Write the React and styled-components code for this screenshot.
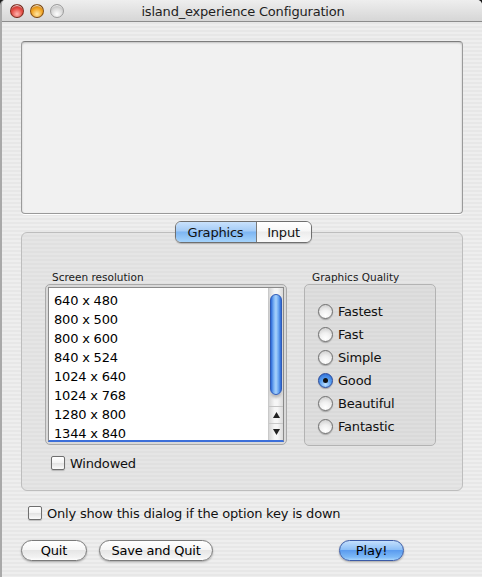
import React from 'react';
import styled, { createGlobalStyle, css } from 'styled-components';

const resolutions = [
  '640 x 480',
  '800 x 500',
  '800 x 600',
  '840 x 524',
  '1024 x 640',
  '1024 x 768',
  '1280 x 800',
  '1344 x 840',
];

const qualities = ['Fastest', 'Fast', 'Simple', 'Good', 'Beautiful', 'Fantastic'];

const GlobalStyle = createGlobalStyle`
  html, body {
    margin: 0;
    padding: 0;
    background: #1c1c1c;
  }
  * {
    box-sizing: border-box;
  }
`;

const pinstripe = css`
  background: repeating-linear-gradient(
    to bottom,
    #eeeeee 0px,
    #eeeeee 2px,
    #e7e7e7 2px,
    #e7e7e7 4px
  );
`;

const Window = styled.div`
  width: 482px;
  height: 577px;
  display: flex;
  flex-direction: column;
  font-family: "DejaVu Sans", "Lucida Grande", sans-serif;
  letter-spacing: -0.2px;
  color: #111;
  border-radius: 5px 5px 0 0;
  overflow: hidden;
  border-left: 2px solid #a9a9a9;
  ${pinstripe}
`;

const TitleBar = styled.div`
  height: 22px;
  flex: none;
  display: flex;
  align-items: center;
  padding-left: 8px;
  border-bottom: 1px solid #8c8c8c;
  background: linear-gradient(to bottom, #eeeeee 0%, #e2e2e2 50%, #d6d6d6 100%);
`;

const Lights = styled.div`
  display: flex;
  gap: 6px;
`;

const lightColors = {
  close: ['#ffb3ad', '#e2463f', '#8e1b14'],
  min: ['#ffe6a3', '#f0a11d', '#9a5a06'],
  zoom: ['#ffffff', '#d6d6d6', '#9a9a9a'],
};

const Light = styled.span`
  width: 14px;
  height: 14px;
  border-radius: 50%;
  background: radial-gradient(
    circle at 50% 75%,
    ${p => lightColors[p.$kind][0]} 0%,
    ${p => lightColors[p.$kind][1]} 55%,
    ${p => lightColors[p.$kind][2]} 100%
  );
  border: 1px solid ${p => (p.$kind === 'zoom' ? '#9c9c9c' : 'rgba(60,20,0,0.55)')};
  box-shadow: inset 0 2px 1px -1px rgba(255, 255, 255, 0.85);
`;

const Title = styled.div`
  flex: 1;
  text-align: center;
  font-size: 13px;
  color: #1e1e1e;
  margin-right: 60px;
  padding-top: 1px;
`;

const Content = styled.div`
  display: flex;
  flex-direction: column;
  padding: 0 19px 0 19px;
`;

const TopPanel = styled.div`
  margin-top: 19px;
  height: 173px;
  border: 1px solid #9a9a9a;
  border-top-color: #7d7d7d;
  border-radius: 4px;
  background: #f1f1f1;
  box-shadow: inset 0 1px 2px rgba(0, 0, 0, 0.2), 0 1px 0 #fff;
`;

const TabBox = styled.div`
  margin-top: 18px;
  height: 259px;
  border: 1px solid #bdbdbd;
  border-radius: 6px;
  display: flex;
  flex-direction: column;
  background: repeating-linear-gradient(
    to bottom,
    #e5e5e5 0px,
    #e5e5e5 2px,
    #e0e0e0 2px,
    #e0e0e0 4px
  );
`;

const Tabs = styled.div`
  align-self: center;
  margin-top: -12px;
  margin-left: 2px;
  display: flex;
  height: 22px;
  border: 1px solid #6f6f6f;
  border-radius: 6px;
  overflow: hidden;
  box-shadow: 0 1px 1px rgba(0, 0, 0, 0.2);
`;

const Tab = styled.div`
  font-size: 13px;
  display: flex;
  align-items: center;
  justify-content: center;
  width: ${p => p.$width}px;
  color: #111;
  background: ${p =>
    p.$active
      ? 'linear-gradient(to bottom, #c9e2fc 0%, #a4cbf6 45%, #7db5f2 50%, #a5d3fb 100%)'
      : 'linear-gradient(to bottom, #ffffff 0%, #f7f7f7 45%, #ececec 50%, #fafafa 100%)'};
  & + & {
    border-left: 1px solid #7a7a7a;
  }
`;

const Columns = styled.div`
  display: flex;
  margin-top: 28px;
  padding-left: 23px;
  gap: 17px;
`;

const Column = styled.div`
  display: flex;
  flex-direction: column;
  width: ${p => p.$width}px;
`;

const GroupLabel = styled.div`
  font-size: 10.5px;
  letter-spacing: 0;
  line-height: 13px;
  height: 13px;
  color: #1a1a1a;
  padding-left: ${p => p.$indent}px;
`;

const ListFrame = styled.div`
  height: 161px;
  flex: none;
  border: 1px solid #a9a9a9;
  border-radius: 5px;
  padding: 2px;
  background: #d9d9d9;
  display: flex;
`;

const ListInner = styled.div`
  flex: 1;
  display: flex;
  overflow: hidden;
  background: #fff;
  border: 1px solid #8a8a8a;
  border-bottom: 2px solid #3c6fd9;
`;

const Rows = styled.div`
  flex: 1;
  padding-top: 3px;
  padding-left: 5px;
`;

const Row = styled.div`
  height: 19px;
  line-height: 19px;
  font-size: 13px;
  color: #000;
`;

const Scrollbar = styled.div`
  width: 15px;
  display: flex;
  flex-direction: column;
  border-left: 1px solid #c9c9c9;
  background: linear-gradient(to right, #d6d6d6 0%, #f6f6f6 40%, #f6f6f6 60%, #dadada 100%);
`;

const Track = styled.div`
  flex: 1;
  padding: 6px 1px 0 1px;
  display: flex;
  flex-direction: column;
`;

const Thumb = styled.div`
  height: 101px;
  border-radius: 7px;
  border: 1px solid #2e5ab7;
  background: linear-gradient(
    to right,
    #2d6ad8 0%,
    #7fb6f6 30%,
    #a9d2fb 50%,
    #6aa6f0 75%,
    #2b66d4 100%
  );
  box-shadow: 0 4px 3px -1px rgba(0, 0, 0, 0.25);
`;

const Arrows = styled.div`
  height: 34px;
  display: flex;
  flex-direction: column;
  border-top: 1px solid #c4c4c4;
`;

const ArrowButton = styled.div`
  flex: 1;
  display: flex;
  align-items: center;
  justify-content: center;
  & + & {
    border-top: 1px solid #c8c8c8;
  }
`;

const CheckRow = styled.label`
  display: flex;
  align-items: center;
  gap: 5px;
  font-size: 13px;
  height: 16px;
  margin-top: ${p => p.$top}px;
  padding-left: ${p => p.$indent}px;
`;

const Checkbox = styled.span`
  width: 14px;
  height: 14px;
  flex: none;
  border: 1px solid #6f6f6f;
  border-radius: 2px;
  background: linear-gradient(to bottom, #ffffff 0%, #f3f3f3 50%, #e2e2e2 51%, #fbfbfb 100%);
  box-shadow: 0 1px 1px rgba(0, 0, 0, 0.2);
`;

const QualityBox = styled.div`
  height: 162px;
  border: 1px solid #b3b3b3;
  border-radius: 5px;
  background: repeating-linear-gradient(
    to bottom,
    #dedede 0px,
    #dedede 2px,
    #d9d9d9 2px,
    #d9d9d9 4px
  );
  padding: 15px 0 0 13px;
  display: flex;
  flex-direction: column;
`;

const RadioRow = styled.div`
  display: flex;
  align-items: center;
  gap: 5px;
  height: 23px;
  font-size: 13px;
`;

const Radio = styled.span`
  width: 15px;
  height: 15px;
  flex: none;
  border-radius: 50%;
  display: flex;
  align-items: center;
  justify-content: center;
  border: 1px solid ${p => (p.$checked ? '#27489a' : '#707070')};
  background: ${p =>
    p.$checked
      ? 'radial-gradient(circle at 50% 80%, #bfe2ff 0%, #5aa0f0 45%, #2360cf 100%)'
      : 'radial-gradient(circle at 50% 80%, #ffffff 0%, #f0f0f0 45%, #c6c6c6 100%)'};
  box-shadow: 0 1px 1px rgba(0, 0, 0, 0.25);
`;

const Dot = styled.span`
  width: 5px;
  height: 5px;
  border-radius: 50%;
  background: #111;
`;

const ButtonRow = styled.div`
  display: flex;
  margin-top: 19px;
`;

const Button = styled.div`
  width: ${p => p.$width}px;
  margin-left: ${p => p.$left || 0}px;
  height: 21px;
  border-radius: 11px;
  display: flex;
  align-items: center;
  justify-content: center;
  font-size: 13px;
  color: #000;
  border: 1px solid ${p => (p.$primary ? '#3b5ba6' : '#7a7a7a')};
  background: ${p =>
    p.$primary
      ? 'linear-gradient(to bottom, #c3dffc 0%, #8ec0f7 45%, #5b9cef 50%, #7db9f7 85%, #a9d6fd 100%)'
      : 'linear-gradient(to bottom, #ffffff 0%, #f6f6f6 45%, #e6e6e6 50%, #f2f2f2 85%, #fdfdfd 100%)'};
  box-shadow: 0 1px 2px rgba(0, 0, 0, 0.3);
`;

const Arrow = ({ up }) => (
  <svg width="7" height="6" viewBox="0 0 7 6">
    <path d={up ? 'M3.5 0 L7 6 L0 6 Z' : 'M0 0 L7 0 L3.5 6 Z'} fill="#222" />
  </svg>
);

const App = () => (
  <>
    <GlobalStyle />
    <Window>
      <TitleBar>
        <Lights>
          <Light $kind="close" />
          <Light $kind="min" />
          <Light $kind="zoom" />
        </Lights>
        <Title>island_experience Configuration</Title>
      </TitleBar>
      <Content>
        <TopPanel />
        <TabBox>
          <Tabs>
            <Tab $active $width={80}>Graphics</Tab>
            <Tab $width={55}>Input</Tab>
          </Tabs>
          <Columns>
            <Column $width={242}>
              <GroupLabel $indent={7}>Screen resolution</GroupLabel>
              <ListFrame>
                <ListInner>
                  <Rows>
                    {resolutions.map(r => (
                      <Row key={r}>{r}</Row>
                    ))}
                  </Rows>
                  <Scrollbar>
                    <Track>
                      <Thumb />
                    </Track>
                    <Arrows>
                      <ArrowButton><Arrow up /></ArrowButton>
                      <ArrowButton><Arrow /></ArrowButton>
                    </Arrows>
                  </Scrollbar>
                </ListInner>
              </ListFrame>
              <CheckRow $top={10} $indent={6}>
                <Checkbox />
                Windowed
              </CheckRow>
            </Column>
            <Column $width={132}>
              <GroupLabel $indent={8}>Graphics Quality</GroupLabel>
              <QualityBox>
                {qualities.map(q => (
                  <RadioRow key={q}>
                    <Radio $checked={q === 'Good'}>{q === 'Good' && <Dot />}</Radio>
                    {q}
                  </RadioRow>
                ))}
              </QualityBox>
            </Column>
          </Columns>
        </TabBox>
        <CheckRow $top={14} $indent={7}>
          <Checkbox />
          Only show this dialog if the option key is down
        </CheckRow>
        <ButtonRow>
          <Button $width={66}>Quit</Button>
          <Button $width={114} $left={12}>Save and Quit</Button>
          <Button $width={65} $left={126} $primary>Play!</Button>
        </ButtonRow>
      </Content>
    </Window>
  </>
);

export default App;
